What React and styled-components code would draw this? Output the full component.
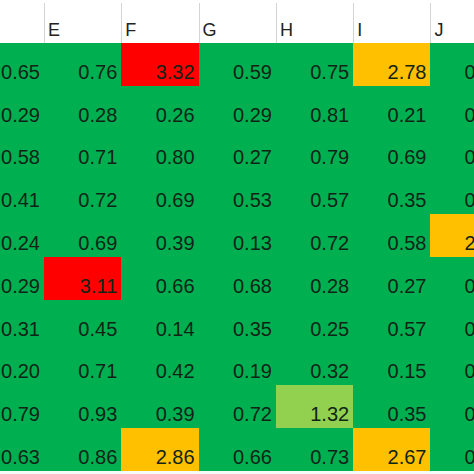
import styled, { createGlobalStyle } from 'styled-components';

const GlobalStyle = createGlobalStyle`
  html, body {
    margin: 0;
    padding: 0;
    background: #f4fbf8;
  }
`;

const fills = {
  g: '#00b050',
  r: '#ff0000',
  o: '#ffc000',
  l: '#92d050',
};

const Sheet = styled.div`
  width: 474px;
  height: 474px;
  overflow: hidden;
  background: #f4fbf8;
  font-family: 'Liberation Sans', Arial, sans-serif;
`;

const Grid = styled.div`
  display: grid;
  grid-template-columns: 44px repeat(5, 77.3px) 77px;
  grid-template-rows: 43px repeat(10, 42.8px);
  width: 507px;
`;

const HeadCell = styled.div`
  display: flex;
  align-items: flex-end;
  background: #fff;
  padding: 0 0 2px 4px;
  font-size: 18px;
  color: #222;
  position: relative;

  &::before {
    content: '';
    position: absolute;
    left: 0;
    top: 3px;
    bottom: 0;
    width: 1px;
    background: ${(p) => (p.$first ? 'transparent' : '#d4d4d4')};
  }
`;

const Cell = styled.div`
  display: flex;
  align-items: flex-end;
  justify-content: flex-end;
  overflow: hidden;
  white-space: nowrap;
  padding: 0 4px 2px 0;
  background: ${(p) => fills[p.$fill]};
  font-size: 20px;
  color: #0f2417;
`;

const headers = ['', 'E', 'F', 'G', 'H', 'I', 'J'];

const rows = [
  [['0.65'], ['0.76'], ['3.32', 'r'], ['0.59'], ['0.75'], ['2.78', 'o'], ['0.41']],
  [['0.29'], ['0.28'], ['0.26'], ['0.29'], ['0.81'], ['0.21'], ['0.33']],
  [['0.58'], ['0.71'], ['0.80'], ['0.27'], ['0.79'], ['0.69'], ['0.52']],
  [['0.41'], ['0.72'], ['0.69'], ['0.53'], ['0.57'], ['0.35'], ['0.64']],
  [['0.24'], ['0.69'], ['0.39'], ['0.13'], ['0.72'], ['0.58'], ['2.45', 'o']],
  [['0.29'], ['3.11', 'r'], ['0.66'], ['0.68'], ['0.28'], ['0.27'], ['0.38']],
  [['0.31'], ['0.45'], ['0.14'], ['0.35'], ['0.25'], ['0.57'], ['0.22']],
  [['0.20'], ['0.71'], ['0.42'], ['0.19'], ['0.32'], ['0.15'], ['0.47']],
  [['0.79'], ['0.93'], ['0.39'], ['0.72'], ['1.32', 'l'], ['0.35'], ['0.61']],
  [['0.63'], ['0.86'], ['2.86', 'o'], ['0.66'], ['0.73'], ['2.67', 'o'], ['0.56']],
];

export default function App() {
  return (
    <Sheet>
      <GlobalStyle />
      <Grid>
        {headers.map((h, i) => (
          <HeadCell key={'h' + i} $first={i === 0}>
            {h}
          </HeadCell>
        ))}
        {rows.map((row, r) =>
          row.map(([value, fill = 'g'], c) => (
            <Cell key={r + '-' + c} $fill={fill}>
              {value}
            </Cell>
          ))
        )}
      </Grid>
    </Sheet>
  );
}
